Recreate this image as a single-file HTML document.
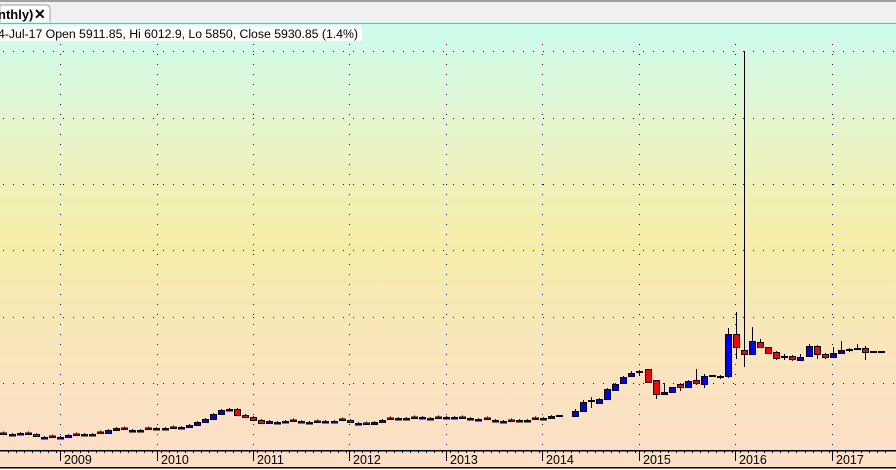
<!DOCTYPE html>
<html><head><meta charset="utf-8"><style>
html,body{margin:0;padding:0;width:896px;height:470px;overflow:hidden;background:#fff;font-family:"Liberation Sans",sans-serif}
</style></head><body>
<svg id="s" width="896" height="470" xmlns="http://www.w3.org/2000/svg" style="position:absolute;left:0;top:0">
<defs><linearGradient id="g" x1="0" y1="0" x2="0" y2="1">
<stop offset="0" stop-color="#cbfcef"/><stop offset="0.25" stop-color="#e6f5cc"/><stop offset="0.5" stop-color="#f6eea9"/><stop offset="0.75" stop-color="#f9e6bb"/><stop offset="1" stop-color="#fcdfc6"/></linearGradient></defs>
<rect x="0" y="0" width="896" height="22" fill="#f0f0f0"/>
<rect x="0" y="0" width="896" height="2" fill="#a0a0a0"/>
<path d="M0 5 H46 Q50 5 50 9 V23 H0Z" fill="#fff" stroke="#a0a0a0"/>
<text x="-2" y="19" font-size="13" font-weight="bold" fill="#000">nthly)</text>
<text x="34" y="19" font-size="14" font-weight="bold" fill="#000">✕</text>
<rect x="0" y="22" width="896" height="429" fill="url(#g)"/>
<rect x="0" y="23" width="896" height="1" fill="#a0a0a0"/>
<rect x="0" y="25" width="362" height="16" fill="#fff"/>
<text x="-2" y="38" font-size="12.3" fill="#000" textLength="360">4-Jul-17 Open 5911.85, Hi 6012.9, Lo 5850, Close 5930.85 (1.4%)</text>
<g id="grid" stroke="#000" stroke-width="1" stroke-dasharray="1,9"></g>
<g id="c"></g>
<rect x="0" y="450" width="896" height="1.5" fill="#000"/>
<rect x="0" y="451.5" width="896" height="16" fill="#fcdfc6"/>
<g id="ax" fill="#000" font-size="12.5"></g>
<rect x="0" y="467" width="896" height="1.5" fill="#000"/>
</svg>
<script>
var NS="http://www.w3.org/2000/svg";
function el(p,t,a,txt){var e=document.createElementNS(NS,t);for(var k in a)e.setAttribute(k,a[k]);if(txt)e.textContent=txt;document.getElementById(p).appendChild(e);}
[51,118,184,250,317,383].forEach(function(y){el("grid","line",{x1:3,y1:y+.5,x2:896,y2:y+.5});});
var yx=[60,157,253,349,446,542,639,735,832];
yx.forEach(function(x,i){el("grid","line",{x1:x+.5,y1:44,x2:x+.5,y2:450});
 el("ax","rect",{x:x,y:451,width:1,height:10});el("ax","text",{x:x+4,y:464},String(2009+i));});
function X(i){return 728+8.05*(i-95);}
for(var i=0;i<120;i++){var x=Math.round(X(i));if(x>0&&x<890)el("ax","rect",{x:x-4,y:451,width:1,height:2});}
var early=[434,434,433,434,436,437,437, 437,435,435,434,434,433,430,428,429,430,430,429,
428,428,428,427,425,422,419,414,410,409,415,417, 420,423,421,422,421,421,421,422,422,421,421,420,
422,423,424,422,420,419,418,418,418,417,418,418, 417,417,418,418,419,419,420,421,421,420,420,419, 418,416,416];
var data=[];var prev=434;
for(var k=0;k<early.length;k++){var c=early[k],o=prev;if(Math.abs(c-o)<2){o=c+((k%3==0)?-1.5:1.5);}
 data.push([5+k,o,c,Math.min(o,c)-1,Math.max(o,c)+1]);prev=c;}
data[data.length-1]=[5+early.length-1,416,416,415,417];
var late=[[76,416,411,409,417],[77,411,402,400,411],[78,401,401,397,408],[79,403,399,398,404],[80,399,389,388,400],[81,390,384,383,391],
[82,383,377,376,384],[83,376,373,371,377],[84,372,372,370,376],[85,369,382,369,382],[86,380,394,380,399],[87,394,392,383,394],
[88,392,387,387,393],[89,384,387,383,391],[90,387,381,380,388],[91,380,383,369,385],[92,384,376,374,388],[93,376,376,375,377],
[94,377,377,375,379],[95,376,334,328,378],[96,334,347,312,359],[97,350,354,51,367],[98,354,341,327,355],[99,342,347,339,348],
[100,347,353,347,354],[101,352,358,351,360],[102,357,357,354,360],[103,356,359,355,361],[104,360,357,354,361],[105,356,346,344,357],
[106,346,354,345,359],[107,354,357,353,359],[108,357,353,347,358],[109,353,350,341,354],[110,350,350,348,352],[111,349,349,344,350],
[112,348,352,346,360],[113,352,352,351,353],[114,352,352,351,353]];
data=data.concat(late);
data.forEach(function(d){var x=Math.round(X(d[0]));var o=d[1],c=d[2],h=d[3],l=d[4];
 el("c","line",{x1:x+.5,y1:h,x2:x+.5,y2:l,stroke:"#000","stroke-width":1});
 var t=Math.min(o,c),b=Math.max(o,c);
 if(b-t<1.5){el("c","rect",{x:x-3,y:t-1,width:7,height:2,fill:"#000"});}
 else el("c","rect",{x:x-2.5,y:t+.5,width:6,height:b-t,fill:(c<o?"#0000ff":"#ff0000"),stroke:"#000","stroke-width":1});
});
</script>
</body></html>
